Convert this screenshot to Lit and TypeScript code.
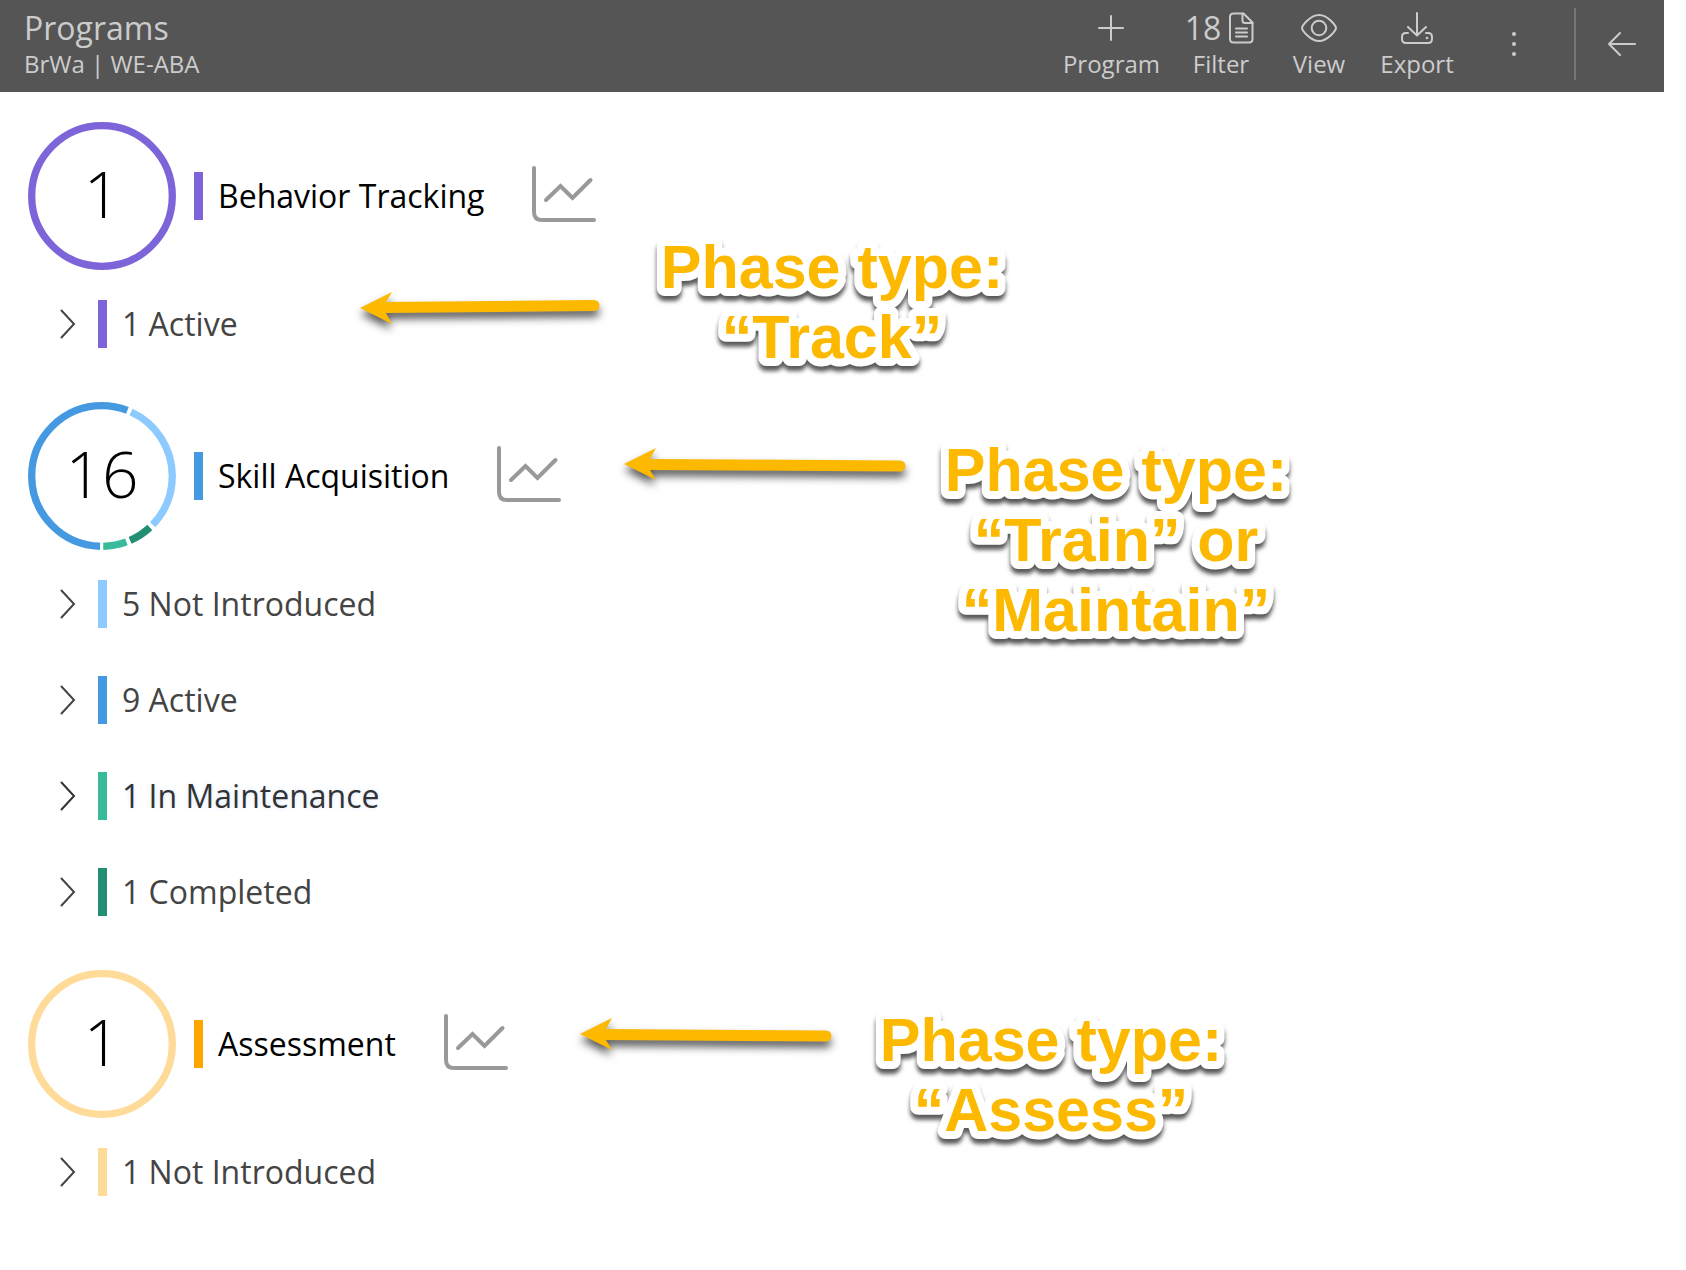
import { LitElement, html, css, svg, nothing, TemplateResult } from "lit";
import { customElement, property, state } from "lit/decorators.js";
import { classMap } from "lit/directives/class-map.js";

type Tone = "purple" | "blue" | "sky" | "mint" | "green" | "orange" | "peach";

interface Phase {
  count: number;
  label: string;
  tone: Tone;
  focused?: boolean;
}

interface Slice {
  value: number;
  tone: Tone;
}

interface Note {
  name: string;
  lines: string[];
  width: number;
  arrow: string;
}

interface Program {
  title: string;
  tone: Tone;
  slices: Slice[];
  phases: Phase[];
  note: Note;
}

const TONES: Record<Tone, string> = {
  purple: "#7e64d9",
  blue: "#4599e1",
  sky: "#8dcaff",
  mint: "#38ba9b",
  green: "#228f75",
  orange: "#ffa500",
  peach: "#ffdb99",
};

const PROGRAMS: Program[] = [
  {
    title: "Behavior Tracking",
    tone: "purple",
    slices: [{ value: 1, tone: "purple" }],
    phases: [{ count: 1, label: "Active", tone: "purple" }],
    note: {
      name: "track",
      lines: ["Phase type:", "“Track”"],
      width: 240,
      arrow: "M0 16 L32 0 L26 10 L234 8 A5.5 5.5 0 0 1 234 19 L26 21 L32 32 Z",
    },
  },
  {
    title: "Skill Acquisition",
    tone: "blue",
    slices: [
      { value: 9, tone: "blue" },
      { value: 5, tone: "sky" },
      { value: 1, tone: "green" },
      { value: 1, tone: "mint" },
    ],
    phases: [
      { count: 5, label: "Not Introduced", tone: "sky" },
      { count: 9, label: "Active", tone: "blue" },
      { count: 1, label: "In Maintenance", tone: "mint", focused: true },
      { count: 1, label: "Completed", tone: "green" },
    ],
    note: {
      name: "train",
      lines: ["Phase type:", "“Train” or", "“Maintain”"],
      width: 282,
      arrow: "M0 16 L32 0 L26 11 L276 12.5 A5.5 5.5 0 0 1 276 23.5 L26 22 L32 32 Z",
    },
  },
  {
    title: "Assessment",
    tone: "orange",
    slices: [{ value: 1, tone: "peach" }],
    phases: [{ count: 1, label: "Not Introduced", tone: "peach" }],
    note: {
      name: "assess",
      lines: ["Phase type:", "“Assess”"],
      width: 252,
      arrow: "M0 16 L32 0 L26 11 L246 12.5 A5.5 5.5 0 0 1 246 23.5 L26 22 L32 32 Z",
    },
  },
];

@customElement("count-ring")
export class CountRing extends LitElement {
  @property({ attribute: false }) slices: Slice[] = [];

  static styles = css`
    :host { display: block; flex: none; }
    .ring { display: block; width: 148px; height: 148px; }
    .arc { fill: none; stroke-width: 7.3; }
    .count {
      font-family: "Open Sans", "Noto Sans", sans-serif;
      font-size: 64px;
      font-weight: 300;
      text-anchor: middle;
      fill: #000;
    }
  `;

  render() {
    const radius = 70.3;
    const around = 2 * Math.PI * radius;
    const total = this.slices.reduce((sum, s) => sum + s.value, 0);
    const gap = this.slices.length > 1 ? 4 : 0;
    let from = 0;
    // Arcs run clockwise, starting from the bottom of the ring.
    const arcs = this.slices.map((s) => {
      const length = (s.value / total) * around;
      const arc = svg`<circle class="arc" cx="74" cy="74" r=${radius} stroke=${TONES[s.tone]}
        transform="rotate(90 74 74)"
        stroke-dasharray="${length - gap} ${around - length + gap}"
        stroke-dashoffset=${-(from + gap / 2)} />`;
      from += length;
      return arc;
    });
    return html`<svg class="ring" viewBox="0 0 148 148">
      ${arcs}
      <text class="count" x="74" y="96">${total}</text>
    </svg>`;
  }
}

@customElement("program-section")
export class ProgramSection extends LitElement {
  @property({ attribute: false }) program!: Program;
  @state() private open = new Set<number>();

  static styles = css`
    :host { display: block; }
    .head { display: flex; align-items: center; margin-bottom: 6px; }
    .mark { flex: none; width: 9px; height: 48px; margin-right: 15px; }
    .head .mark { margin-left: 18px; }
    .title { margin: 0 41px 0 0; font-size: 32px; line-height: 48px; font-weight: 400; color: #000; }
    button { border: 0; background: none; font: inherit; color: inherit; cursor: pointer; }
    .chart { display: flex; padding: 0; }
    .chart svg { display: block; width: 80px; height: 72px; }
    .list { margin: 0; padding: 0; list-style: none; }
    .phase {
      display: flex;
      align-items: center;
      height: 96px;
      padding: 0 0 0 32px;
      font-size: 32px;
      line-height: 48px;
      text-align: left;
      color: #444;
    }
    .phase svg { display: block; flex: none; width: 16px; height: 30px; margin-right: 22px; }
    .focused { color: #333; text-shadow: 0 0 5px #d8e8ff; }
    .purple { background: #7e64d9; }
    .blue { background: #4599e1; }
    .sky { background: #8dcaff; }
    .mint { background: #38ba9b; }
    .green { background: #228f75; }
    .orange { background: #ffa500; }
    .peach { background: #ffdb99; }
  `;

  private toggle(i: number) {
    const next = new Set(this.open);
    next.has(i) ? next.delete(i) : next.add(i);
    this.open = next;
  }

  render() {
    const p = this.program;
    return html`
      <div class="head">
        <count-ring .slices=${p.slices}></count-ring>
        <span class="mark ${p.tone}"></span>
        <h2 class="title">${p.title}</h2>
        <button class="chart" aria-label="${p.title} chart">
          <svg viewBox="0 0 80 72" fill="none" stroke="#999" stroke-width="4" stroke-linecap="round">
            <path d="M9 8V52Q9 60 17 60H69" />
            <path d="M21 40L35.5 26L47.5 38L65.5 20" />
          </svg>
        </button>
      </div>
      <ul class="list">
        ${p.phases.map(
          (phase, i) => html`<li>
            <button
              class=${classMap({ phase: true, focused: !!phase.focused })}
              aria-expanded=${this.open.has(i) ? "true" : "false"}
              @click=${() => this.toggle(i)}
            >
              <svg viewBox="0 0 16 30" fill="none" stroke="currentColor" stroke-width="2" stroke-linecap="round">
                <path d="M1.5 1.5L14 15L1.5 28.5" />
              </svg>
              <span class="mark ${phase.tone}"></span>
              <span>${phase.count} ${phase.label}</span>
            </button>
          </li>`
        )}
      </ul>
    `;
  }
}

const icon = (w: number, h: number, body: ReturnType<typeof svg>) => html`<svg
  class="icon"
  width=${w}
  height=${h}
  viewBox="0 0 ${w} ${h}"
  fill="none"
  stroke="currentColor"
  stroke-width="2"
  stroke-linecap="round"
  stroke-linejoin="round"
>${body}</svg>`;

const ICONS = {
  plus: icon(32, 32, svg`<path d="M16 4V28M4 16H28" />`),
  file: icon(32, 32, svg`
    <path d="M18.5 1.5H8.5Q5 1.5 5 5V27Q5 30.5 8.5 30.5H24Q27.5 30.5 27.5 27V10.5Z" />
    <path d="M17.5 1.5V8.5Q17.5 11 20 11H27.5" />
    <path d="M11 16.5H22M11 20.5H22M11 24.5H22" />`),
  eye: icon(38, 32, svg`
    <path d="M2 16C2 14 10 3 19 3S36 14 36 16S28 29 19 29S2 18 2 16Z" />
    <circle cx="19" cy="16" r="7.3" />`),
  download: icon(34, 32, svg`
    <path d="M17 1V23M8 15L17 23.5L26 15" />
    <path d="M8 21H6Q2 21 2 25V27Q2 31 6 31H28Q32 31 32 27V25Q32 21 28 21H26" />
    <circle cx="27" cy="26" r="1.3" fill="currentColor" stroke="none" />`),
  dots: icon(32, 32, svg`
    <g fill="currentColor" stroke="none">
      <circle cx="16" cy="6" r="2" /><circle cx="16" cy="16" r="2" /><circle cx="16" cy="26" r="2" />
    </g>`),
  back: icon(32, 32, svg`<path d="M29 16H3M14 5L3 16L14 27" />`),
};

@customElement("app-root")
export class AppRoot extends LitElement {
  static styles = css`
    :host {
      display: block;
      min-height: 100vh;
      background: #fff;
      font-family: "Open Sans", "Noto Sans", sans-serif;
    }
    .bar {
      display: flex;
      margin-right: 22px;
      padding: 8px 0 12px 24px;
      background: #555;
      color: #ccc;
    }
    .name { flex: 1; }
    .heading { margin: 0; font-size: 32px; line-height: 40px; font-weight: 400; }
    .client { margin: 0; font-size: 24px; line-height: 32px; }
    .tools { display: flex; align-items: stretch; }
    button { border: 0; margin: 0; background: none; font: inherit; color: inherit; cursor: pointer; }
    .tool {
      display: flex;
      flex-direction: column;
      align-items: center;
      min-width: 98px;
      padding: 0 12px;
      font-size: 24px;
      line-height: 32px;
    }
    .top { display: flex; align-items: center; gap: 4px; height: 40px; font-size: 32px; line-height: 40px; }
    .icon { display: block; flex: none; }
    .plain { display: flex; align-items: center; justify-content: center; padding: 0; }
    .more { width: 96px; }
    .back { width: 84px; margin-left: 4px; }
    .rule { width: 2px; margin-left: 12px; background: #777; }
    .programs { display: flex; flex-direction: column; gap: 30px; padding: 30px 28px; }
    .program { position: relative; }

    /* Annotations drawn over the list */
    .arrow, .note { position: absolute; display: block; overflow: visible; pointer-events: none; }
    .arrow { fill: #fcb900; filter: drop-shadow(0 6px 4px rgba(0, 0, 0, 0.65)); }
    .note {
      font-family: "Liberation Sans", Arial, sans-serif;
      font-size: 61px;
      font-weight: 700;
      text-anchor: middle;
      filter: drop-shadow(0 5px 2px rgba(0, 0, 0, 0.65));
    }
    .line {
      fill: #fcb900;
      stroke: #fff;
      stroke-width: 16px;
      stroke-linejoin: round;
      paint-order: stroke;
    }
    .track .arrow { left: 332px; top: 170px; }
    .track .note { left: 632px; top: 114px; }
    .train .arrow { left: 596px; top: 46px; }
    .train .note { left: 916px; top: 37px; }
    .assess .arrow { left: 552px; top: 48px; }
    .assess .note { left: 851px; top: 39px; }
  `;

  private tool(label: string, glyph: TemplateResult, count?: number) {
    return html`<button class="tool">
      <span class="top">${count ?? nothing}${glyph}</span>
      <span>${label}</span>
    </button>`;
  }

  private annotation({ lines, width, arrow }: Note) {
    const height = lines.length * 70;
    return html`
      <svg class="arrow" width=${width} height="32" aria-hidden="true"><path d=${arrow} /></svg>
      <svg class="note" width="344" height=${height}>
        ${lines.map((l, i) => svg`<text class="line" x="172" y=${52 + i * 70}>${l}</text>`)}
      </svg>
    `;
  }

  render() {
    return html`
      <header class="bar">
        <div class="name">
          <h1 class="heading">Programs</h1>
          <p class="client">BrWa | WE-ABA</p>
        </div>
        <div class="tools">
          ${this.tool("Program", ICONS.plus)}
          ${this.tool("Filter", ICONS.file, 18)}
          ${this.tool("View", ICONS.eye)}
          ${this.tool("Export", ICONS.download)}
          <button class="plain more" aria-label="More">${ICONS.dots}</button>
          <span class="rule"></span>
          <button class="plain back" aria-label="Back">${ICONS.back}</button>
        </div>
      </header>
      <main class="programs">
        ${PROGRAMS.map(
          (p) => html`<div class="program ${p.note.name}">
            <program-section .program=${p}></program-section>
            ${this.annotation(p.note)}
          </div>`
        )}
      </main>
    `;
  }
}
